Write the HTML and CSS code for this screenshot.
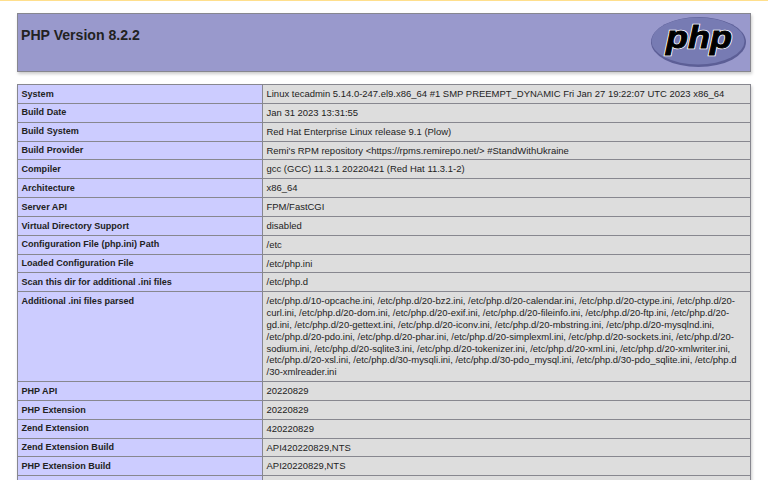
FILE: index.html
```html
<!DOCTYPE html>
<html lang="en">
<head>
<meta charset="utf-8">
<title>phpinfo()</title>
<link rel="stylesheet" href="styles.css">
</head>
<body>
<div class="topline"></div>
<main class="center">
<header class="h">
  <h1>PHP Version 8.2.2</h1>
  <svg class="logo" width="100" height="54" viewBox="0 0 100 54" role="img" aria-label="PHP logo">
    <defs>
      <text id="phpword" x="52" y="32" text-anchor="middle" textLength="66" lengthAdjust="spacingAndGlyphs" class="logotext">php</text>
    </defs>
    <ellipse cx="51.5" cy="26" rx="47.5" ry="25" fill="#5c5e96"/>
    <ellipse cx="51" cy="25" rx="46.5" ry="23.5" fill="#777bb3"/>
    <use href="#phpword" class="halo"/>
    <use href="#phpword" class="ink"/>
  </svg>
</header>
<table class="info">
  <tr><td class="e">System</td><td class="v">Linux tecadmin 5.14.0-247.el9.x86_64 #1 SMP PREEMPT_DYNAMIC Fri Jan 27 19:22:07 UTC 2023 x86_64</td></tr>
  <tr><td class="e">Build Date</td><td class="v">Jan 31 2023 13:31:55</td></tr>
  <tr><td class="e">Build System</td><td class="v">Red Hat Enterprise Linux release 9.1 (Plow)</td></tr>
  <tr><td class="e">Build Provider</td><td class="v">Remi's RPM repository &lt;https://rpms.remirepo.net/&gt; #StandWithUkraine</td></tr>
  <tr><td class="e">Compiler</td><td class="v">gcc (GCC) 11.3.1 20220421 (Red Hat 11.3.1-2)</td></tr>
  <tr><td class="e">Architecture</td><td class="v">x86_64</td></tr>
  <tr><td class="e">Server API</td><td class="v">FPM/FastCGI</td></tr>
  <tr><td class="e">Virtual Directory Support</td><td class="v">disabled</td></tr>
  <tr><td class="e">Configuration File (php.ini) Path</td><td class="v">/etc</td></tr>
  <tr><td class="e">Loaded Configuration File</td><td class="v">/etc/php.ini</td></tr>
  <tr><td class="e">Scan this dir for additional .ini files</td><td class="v">/etc/php.d</td></tr>
  <tr><td class="e">Additional .ini files parsed</td><td class="v">/etc/php.d/10-opcache.ini, /etc/php.d/20-bz2.ini, /etc/php.d/20-calendar.ini, /etc/php.d/20-ctype.ini, /etc/php.d/20-<br>curl.ini, /etc/php.d/20-dom.ini, /etc/php.d/20-exif.ini, /etc/php.d/20-fileinfo.ini, /etc/php.d/20-ftp.ini, /etc/php.d/20-<br>gd.ini, /etc/php.d/20-gettext.ini, /etc/php.d/20-iconv.ini, /etc/php.d/20-mbstring.ini, /etc/php.d/20-mysqlnd.ini,<br>/etc/php.d/20-pdo.ini, /etc/php.d/20-phar.ini, /etc/php.d/20-simplexml.ini, /etc/php.d/20-sockets.ini, /etc/php.d/20-<br>sodium.ini, /etc/php.d/20-sqlite3.ini, /etc/php.d/20-tokenizer.ini, /etc/php.d/20-xml.ini, /etc/php.d/20-xmlwriter.ini,<br>/etc/php.d/20-xsl.ini, /etc/php.d/30-mysqli.ini, /etc/php.d/30-pdo_mysql.ini, /etc/php.d/30-pdo_sqlite.ini, /etc/php.d<br>/30-xmlreader.ini</td></tr>
  <tr><td class="e">PHP API</td><td class="v">20220829</td></tr>
  <tr><td class="e">PHP Extension</td><td class="v">20220829</td></tr>
  <tr><td class="e">Zend Extension</td><td class="v">420220829</td></tr>
  <tr><td class="e">Zend Extension Build</td><td class="v">API420220829,NTS</td></tr>
  <tr><td class="e">PHP Extension Build</td><td class="v">API20220829,NTS</td></tr>
  <tr><td class="e">&nbsp;</td><td class="v">&nbsp;</td></tr>
</table>
</main>
</body>
</html>
```
FILE: styles.css
```css
html, body { margin: 0; padding: 0; height: 480px; overflow: hidden; background: #fff; }
body { color: #222; font-family: "Liberation Sans", Arial, sans-serif; }
.topline { height: 1px; background: #ffdf8c; }
.center { width: 734px; margin: 12px 0 0 16.5px; }
.h { box-sizing: border-box; height: 59px; background: #9999cc; border: 1px solid #87878f; box-shadow: 1px 2px 3px #ccc; display: flex; justify-content: space-between; padding: 11px 0 0 3.5px; position: relative; }
h1 { margin: 0; font-size: 14.1px; line-height: 20px; font-weight: bold; }
.logo { position: absolute; right: 3px; top: 2px; }
.logotext { font: italic bold 31px "Liberation Sans", sans-serif; }
.halo { fill: #000; stroke: #fff; stroke-width: 2.4px; }
.ink { fill: #000; stroke: #000; stroke-width: 0.9px; }
.info { width: 734px; margin-top: 12px; border-collapse: collapse; table-layout: fixed; box-shadow: 1px 2px 3px #ccc; }
.info td { border: 1px solid #87878f; font-size: 9.47px; line-height: 11.83px; padding: 3px 4px; vertical-align: top; height: 18.85px; box-sizing: border-box; }
.info td.e { width: 245px; background: #ccccff; font-weight: bold; font-size: 9.05px; padding-top: 3.6px; padding-bottom: 2.4px; }
.v { background: #dddddd; }
```
